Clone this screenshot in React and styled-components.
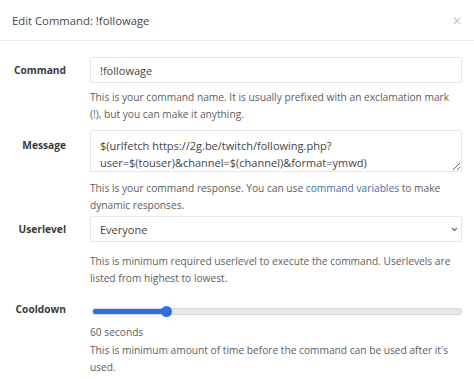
import React, { useState } from 'react';
import styled, { createGlobalStyle } from 'styled-components';

const GlobalStyle = createGlobalStyle`
  body {
    margin: 0;
    background: #fff;
    font-family: "Open Sans", "Liberation Sans", sans-serif;
    color: #4a4a4a;
  }
`;

const Modal = styled.div`
  width: 474px;
  height: 379px;
  overflow: hidden;
  background: #fff;
`;

const Header = styled.div`
  display: flex;
  align-items: center;
  justify-content: space-between;
  height: 40px;
  padding: 0 12px;
  border-bottom: 1px solid #ececec;
`;

const Title = styled.div`
  font-size: 11.3px;
  color: #454545;
`;

const Close = styled.div`
  font-size: 12px;
  color: #c8c8c8;
`;

const Body = styled.div`
  display: flex;
  flex-direction: column;
  padding: 16px 12px 0 0;
`;

const Row = styled.div`
  display: grid;
  grid-template-columns: 66px 1fr;
  column-gap: 24px;
  margin-bottom: ${(p) => p.$gap || 0}px;
`;

const Label = styled.label`
  text-align: right;
  font-size: 10.2px;
  font-weight: 700;
  color: #3a3a3a;
  padding-top: ${(p) => p.$top || 0}px;
  margin-top: ${(p) => p.$shift || 0}px;
`;

const Field = styled.div`
  display: flex;
  flex-direction: column;
`;

const Input = styled.input`
  box-sizing: border-box;
  height: 26px;
  padding: 0 9px;
  border: 1px solid #e6e6e6;
  border-radius: 2px;
  font-family: inherit;
  font-size: 11px;
  color: #444;
  outline: none;
`;

const TextArea = styled.textarea`
  box-sizing: border-box;
  height: 42px;
  padding: 6px 9px 0;
  border: 1px solid #e6e6e6;
  border-radius: 2px;
  font-family: inherit;
  font-size: 11px;
  line-height: 17px;
  color: #444;
  resize: vertical;
  outline: none;
`;

const SelectBox = styled.div`
  box-sizing: border-box;
  display: flex;
  align-items: center;
  justify-content: space-between;
  height: 26px;
  padding: 0 3px 0 9px;
  border: 1px solid #e6e6e6;
  border-radius: 2px;
  font-size: 11px;
  color: #444;
`;

const Help = styled.p`
  margin: ${(p) => p.$top || 6}px 0 0;
  font-size: 10.2px;
  line-height: 16.5px;
  color: #5e5e5e;
`;

const Link = styled.a`
  color: #3f6fa6;
  text-decoration: none;
`;

const Slider = styled.div`
  position: relative;
  height: 10px;
  display: flex;
  align-items: center;
  margin-left: 2px;
`;

const Track = styled.div`
  flex: 1;
  height: 5px;
  border-radius: 3px;
  background: #e9e9e9;
  border: 1px solid #d6d6d6;
  overflow: hidden;
`;

const Fill = styled.div`
  height: 100%;
  background: #2f6fdf;
`;

const Thumb = styled.div`
  position: absolute;
  top: 0;
  width: 11px;
  height: 11px;
  margin-left: -5px;
  border-radius: 50%;
  background: #2f6fdf;
`;

const Value = styled.div`
  margin-top: 9px;
  font-size: 10.2px;
  color: #5e5e5e;
`;

const Chevron = () => (
  <svg width="7" height="5" viewBox="0 0 7 5">
    <path d="M1 1l2.5 2.5L6 1" fill="none" stroke="#777" strokeWidth="1.4" />
  </svg>
);

export default function App() {
  const [cooldown] = useState(60);
  const pct = (cooldown / 300) * 100;
  return (
    <Modal>
      <GlobalStyle />
      <Header>
        <Title>Edit Command: !followage</Title>
        <Close>✕</Close>
      </Header>
      <Body>
        <Row $gap={8}>
          <Label $top={6}>Command</Label>
          <Field>
            <Input defaultValue="!followage" />
            <Help>
              This is your command name. It is usually prefixed with an exclamation mark (!), but you
              can make it anything.
            </Help>
          </Field>
        </Row>
        <Row $gap={3}>
          <Label $top={8}>Message</Label>
          <Field>
            <TextArea
              defaultValue="$(urlfetch https://2g.be/twitch/following.php?user=$(touser)&channel=$(channel)&format=ymwd)"
            />
            <Help $top={8}>
              This is your command response. You can use <Link>command variables</Link> to make
              dynamic responses.
            </Help>
          </Field>
        </Row>
        <Row $gap={20}>
          <Label $top={6}>Userlevel</Label>
          <Field>
            <SelectBox>
              Everyone
              <Chevron />
            </SelectBox>
            <Help $top={11}>
              This is minimum required userlevel to execute the command. Userlevels are listed from
              highest to lowest.
            </Help>
          </Field>
        </Row>
        <Row>
          <Label $shift={-4}>Cooldown</Label>
          <Field>
            <Slider>
              <Track>
                <Fill style={{ width: `${pct}%` }} />
              </Track>
              <Thumb style={{ left: `${pct}%` }} />
            </Slider>
            <Value>{cooldown} seconds</Value>
            <Help $top={3}>
              This is minimum amount of time before the command can be used after it's used.
            </Help>
          </Field>
        </Row>
      </Body>
    </Modal>
  );
}
